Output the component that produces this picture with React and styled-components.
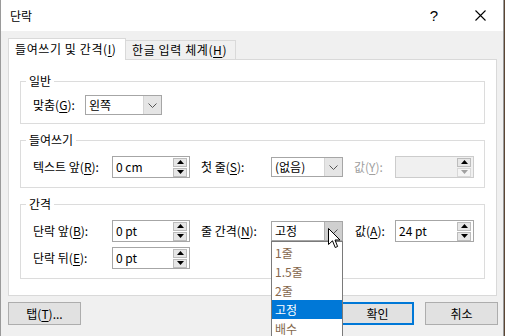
import React from 'react';
import styled, { createGlobalStyle } from 'styled-components';

const Global = createGlobalStyle`
  html, body { margin: 0; padding: 0; background: #5b4634; }
  body {
    font-family: "Noto Sans CJK KR", "Noto Sans", sans-serif;
    font-size: 12px;
    color: #000;
  }
  * { box-sizing: border-box; }
  u { text-underline-offset: 2px; }
`;

const Window = styled.div`
  position: relative;
  width: 504px;
  height: 336px;
  background: #f0f0f0;
  border-left: 1px solid #9a9a9a;
  border-right: 1px solid #9a9a9a;
  display: flex;
  flex-direction: column;
  overflow: hidden;
`;

const TitleBar = styled.div`
  height: 31px;
  flex: none;
  background: #fff;
  display: flex;
  align-items: center;
  padding-left: 9px;
  line-height: 16px;
`;

const Title = styled.div`
  flex: 1;
  font-size: 12px;
`;

const TitleButton = styled.div`
  width: 46px;
  height: 31px;
  display: flex;
  align-items: center;
  justify-content: center;
  font-family: "Liberation Sans", sans-serif;
  font-size: 15px;
`;

const Body = styled.div`
  flex: 1;
  padding: 8px 5px 0 7px;
  display: flex;
  flex-direction: column;
`;

const TabRow = styled.div`
  height: 21px;
  display: flex;
  align-items: flex-end;
  margin-bottom: -1px;
  position: relative;
  z-index: 1;
`;

const Tab = styled.div`
  width: ${p => p.$w}px;
  height: ${p => (p.$active ? 22 : 19)}px;
  margin-bottom: ${p => (p.$active ? 0 : 1)}px;
  margin-left: ${p => (p.$active ? 0 : -1)}px;
  padding: 0 0 ${p => (p.$active ? 1 : 0)}px 6px;
  background: ${p => (p.$active ? '#fff' : '#f0f0f0')};
  border: 1px solid #d9d9d9;
  border-bottom: none;
  display: flex;
  align-items: center;
  line-height: 16px;
  white-space: nowrap;
  letter-spacing: 0.6px;
`;

const Panel = styled.div`
  width: 489px;
  height: 237px;
  background: #fff;
  border: 1px solid #d9d9d9;
  padding: 13px 11px 0 11px;
  display: flex;
  flex-direction: column;
`;

const Group = styled.fieldset`
  margin: 0 0 8px 0;
  padding: ${p => p.$pt}px 11px ${p => p.$pb}px 5px;
  border: 1px solid #dcdcdc;
  min-width: 0;
`;

const Legend = styled.legend`
  padding: 0 3px;
  line-height: 16px;
  font-size: 12px;
`;

const FlexRow = styled.div`
  display: flex;
  align-items: center;
  padding-left: 7px;
  height: 20px;
`;

const Grid = styled.div`
  display: grid;
  grid-template-columns: 79px 78px 81px 72px 52px 79px;
  grid-auto-rows: 22px;
  row-gap: 5px;
  align-items: center;
  padding-left: 7px;
`;

const Label = styled.div`
  line-height: 16px;
  white-space: nowrap;
  color: ${p => (p.$disabled ? '#a0a0a0' : '#000')};
  padding-left: ${p => p.$indent || 0}px;
  width: ${p => (p.$w ? p.$w + 'px' : 'auto')};
`;

const SpinBox = styled.div`
  width: ${p => p.$w}px;
  height: 22px;
  border: 1px solid ${p => (p.$disabled ? '#cccccc' : '#a6a6a6')};
  background: ${p => (p.$disabled ? '#f0f0f0' : '#fff')};
  display: flex;
  align-items: center;
  padding-left: 3px;
  padding-right: 2px;
`;

const SpinText = styled.div`
  flex: 1;
  line-height: 16px;
`;

const SpinButtons = styled.div`
  display: flex;
  flex-direction: column;
  gap: 1px;
`;

const SpinButton = styled.div`
  width: 14px;
  height: 9px;
  background: ${p => (p.$disabled ? '#f4f4f4' : '#e6e6e6')};
  border: 1px solid ${p => (p.$disabled ? '#d8d8d8' : '#bcbcbc')};
  display: flex;
  align-items: center;
  justify-content: center;
`;

const Combo = styled.div`
  position: relative;
  width: ${p => p.$w}px;
  height: 20px;
  border: 1px solid #a6a6a6;
  background: #fff;
  display: flex;
  align-items: stretch;
`;

const ComboText = styled.div`
  flex: 1;
  padding-left: 3px;
  line-height: 18px;
`;

const ComboButton = styled.div`
  width: 18px;
  background: ${p => (p.$hover ? '#cfcfcf' : '#e5e5e5')};
  border-left: 1px solid ${p => (p.$hover ? '#b0b0b0' : '#d4d4d4')};
  display: flex;
  align-items: center;
  justify-content: center;
`;

const DropList = styled.div`
  position: absolute;
  top: 19px;
  left: -1px;
  width: 72px;
  background: #fff;
  border: 1px solid #7a7a7a;
  z-index: 5;
  padding-top: 1px;
`;

const DropItem = styled.div`
  height: 19px;
  line-height: 19px;
  padding-left: 3px;
  background: ${p => (p.$selected ? '#0078d7' : 'transparent')};
  color: ${p => (p.$selected ? '#fff' : '#85674c')};
`;

const ButtonRow = styled.div`
  margin-top: 6px;
  display: flex;
  justify-content: space-between;
`;

const RightButtons = styled.div`
  display: flex;
  gap: 11px;
`;

const Button = styled.div`
  width: 73px;
  height: 23px;
  background: #e1e1e1;
  border: ${p => (p.$default ? '2px solid #0078d7' : '1px solid #adadad')};
  display: flex;
  align-items: center;
  justify-content: center;
  line-height: 16px;
`;

const Cursor = styled.svg`
  position: absolute;
  left: 327px;
  top: 228px;
  z-index: 10;
`;

const Tri = ({ up, color = '#000' }) => (
  <svg width="7" height="4" viewBox="0 0 7 4">
    {up ? <polygon points="0,4 7,4 3.5,0" fill={color} /> : <polygon points="0,0 7,0 3.5,4" fill={color} />}
  </svg>
);

const Chevron = () => (
  <svg width="9" height="5" viewBox="0 0 9 5">
    <polyline points="0.5,0.5 4.5,4.5 8.5,0.5" fill="none" stroke="#555" strokeWidth="1" />
  </svg>
);

const Spinner = ({ w, value, disabled }) => (
  <SpinBox $w={w} $disabled={disabled}>
    <SpinText>{value}</SpinText>
    <SpinButtons>
      <SpinButton $disabled={false}><Tri up color="#000" /></SpinButton>
      <SpinButton $disabled={disabled}><Tri color={disabled ? '#a0a0a0' : '#000'} /></SpinButton>
    </SpinButtons>
  </SpinBox>
);

export default function App() {
  return (
    <>
      <Global />
      <Window>
        <TitleBar>
          <Title>단락</Title>
          <TitleButton>?</TitleButton>
          <TitleButton>
            <svg width="11" height="11" viewBox="0 0 11 11">
              <path d="M0.5 0.5 L10.5 10.5 M10.5 0.5 L0.5 10.5" stroke="#000" strokeWidth="1.1" />
            </svg>
          </TitleButton>
        </TitleBar>
        <Body>
          <TabRow>
            <Tab $active $w={118}>들여쓰기 및 간격(<u>I</u>)</Tab>
            <Tab $w={111}>한글 입력 체계(<u>H</u>)</Tab>
          </TabRow>
          <Panel>
            <Group $pt={6} $pb={8}>
              <Legend>일반</Legend>
              <FlexRow>
                <Label $w={52}>맞춤(<u>G</u>):</Label>
                <Combo $w={77}>
                  <ComboText>왼쪽</ComboText>
                  <ComboButton><Chevron /></ComboButton>
                </Combo>
              </FlexRow>
            </Group>
            <Group $pt={8} $pb={9}>
              <Legend>들여쓰기</Legend>
              <Grid>
                <Label>텍스트 앞(<u>R</u>):</Label>
                <Spinner w={78} value="0 cm" />
                <Label $indent={11}>첫 줄(<u>S</u>):</Label>
                <Combo $w={72}>
                  <ComboText>(없음)</ComboText>
                  <ComboButton><Chevron /></ComboButton>
                </Combo>
                <Label $indent={11} $disabled>값(<u>Y</u>):</Label>
                <Spinner w={79} value="" disabled />
              </Grid>
            </Group>
            <Group $pt={8} $pb={9}>
              <Legend>간격</Legend>
              <Grid>
                <Label>단락 앞(<u>B</u>):</Label>
                <Spinner w={78} value="0 pt" />
                <Label $indent={11}>줄 간격(<u>N</u>):</Label>
                <Combo $w={72}>
                  <ComboText>고정</ComboText>
                  <ComboButton $hover><Chevron /></ComboButton>
                  <DropList>
                    <DropItem>1줄</DropItem>
                    <DropItem>1.5줄</DropItem>
                    <DropItem>2줄</DropItem>
                    <DropItem $selected>고정</DropItem>
                    <DropItem>배수</DropItem>
                  </DropList>
                </Combo>
                <Label $indent={12}>값(<u>A</u>):</Label>
                <Spinner w={79} value="24 pt" />
                <Label>단락 뒤(<u>E</u>):</Label>
                <Spinner w={78} value="0 pt" />
              </Grid>
            </Group>
          </Panel>
          <ButtonRow>
            <Button>탭(<u>T</u>)...</Button>
            <RightButtons>
              <Button $default>확인</Button>
              <Button>취소</Button>
            </RightButtons>
          </ButtonRow>
        </Body>
        <Cursor width="13" height="21" viewBox="0 0 13 21">
          <path d="M0.5 0.5 L0.5 16.5 L4.5 12.8 L7.2 19.5 L9.6 18.5 L7 12 L12 12 Z" fill="#fff" stroke="#000" strokeWidth="1" strokeLinejoin="miter" />
        </Cursor>
      </Window>
    </>
  );
}
